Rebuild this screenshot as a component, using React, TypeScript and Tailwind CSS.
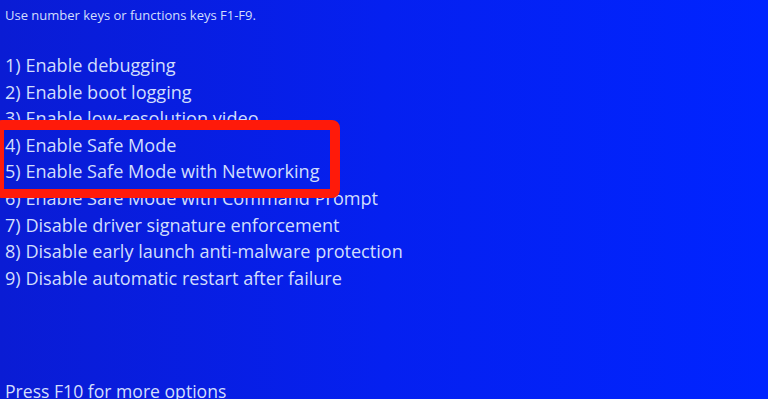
import React from 'react';

const options = [
  '1) Enable debugging',
  '2) Enable boot logging',
  '3) Enable low-resolution video',
  '4) Enable Safe Mode',
  '5) Enable Safe Mode with Networking',
  '6) Enable Safe Mode with Command Prompt',
  '7) Disable driver signature enforcement',
  '8) Disable early launch anti-malware protection',
  '9) Disable automatic restart after failure',
];

export default function App() {
  return (
    <div
      className="relative flex h-[399px] w-[768px] flex-col overflow-hidden bg-gradient-to-r from-[#0a1cd4] via-[#0520f0] to-[#0024ff] text-[#d2defc]"
      style={{ fontFamily: '"Open Sans", "Noto Sans", sans-serif' }}
    >
      <div className="pl-[5px] pt-[6px] text-[13px] leading-[18px]">
        Use number keys or functions keys F1-F9.
      </div>

      <div className="mt-[28px] flex flex-col pl-[5px] text-[18.1px] leading-[26.6px]">
        {options.map((o) => (
          <div key={o}>{o}</div>
        ))}
      </div>

      <div className="mt-auto -mb-[3px] pl-[5px] text-[17.6px] leading-[22px]">
        Press F10 for more options
      </div>

      {/* red highlight frame over options 4 and 5 */}
      <div className="pointer-events-none absolute left-[-6px] top-[120px] h-[78px] w-[346px] rounded-[8px] border-[10px] border-b-[9px] border-[#ff1a0a]" />
    </div>
  );
}
